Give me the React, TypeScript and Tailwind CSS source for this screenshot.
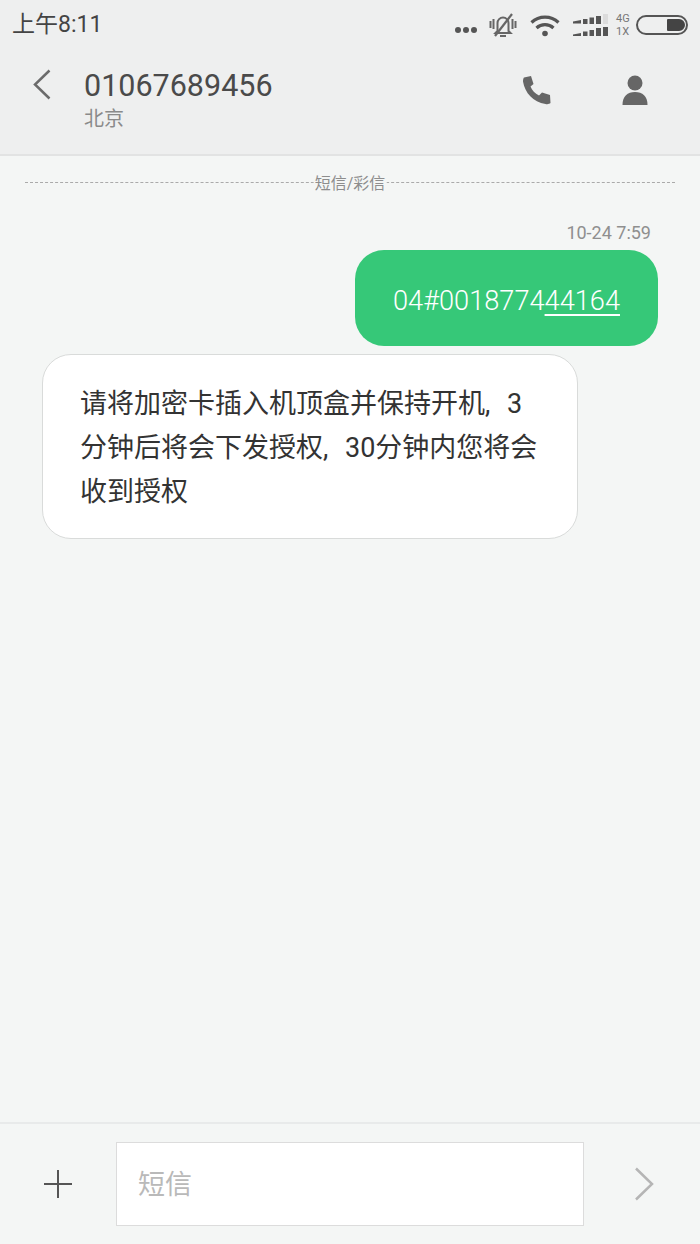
const font = { fontFamily: "Roboto, 'Noto Sans CJK SC', sans-serif" };

function StatusIcons() {
  return (
    <div className="flex items-center">
      {/* more dots */}
      <div className="flex gap-[2px] mt-[10px]">
        <span className="w-[6px] h-[6px] rounded-full bg-[#555]" />
        <span className="w-[6px] h-[6px] rounded-full bg-[#555]" />
        <span className="w-[6px] h-[6px] rounded-full bg-[#555]" />
      </div>
      {/* muted bell */}
      <svg className="ml-[12px]" width="28" height="24" viewBox="0 0 28 24" fill="none" stroke="#666" strokeWidth="2">
        <path d="M8.500 18V10a5.500 5.500 0 0 1 11 0v8l2 2H6.500Z" />
        <path d="M11 23h6" />
        <path d="M1.500 8v7M4.500 6v10M23.500 6v10M26.500 8v7" strokeWidth="2" />
        <path d="M6 23L23 1" strokeWidth="2.200" />
      </svg>
      {/* wifi */}
      <svg className="ml-[13px]" width="30" height="23" viewBox="0 0 30 23" fill="none" stroke="#555" strokeWidth="3.200">
        <path d="M1.500 8.500a19.500 19.500 0 0 1 27 0" />
        <path d="M6.500 14a12.500 12.500 0 0 1 17 0" />
        <circle cx="15" cy="19.500" r="2.800" fill="#555" stroke="none" />
      </svg>
      {/* signal */}
      <svg className="ml-[13px]" width="37" height="23" viewBox="0 0 37 23" fill="#555">
        <path d="M0 7.500L8 6v3.500H0Z" />
        <rect x="10" y="5" width="4.500" height="5" />
        <rect x="16.500" y="3.500" width="4.500" height="6.500" />
        <rect x="23" y="2" width="5" height="8" />
        <rect x="30" y="0" width="5" height="10" fill="#dcdcdc" />
        <path d="M0 20.500L8 19v3H0Z" />
        <rect x="10" y="17.500" width="4.500" height="4.500" />
        <rect x="16.500" y="16" width="4.500" height="6" />
        <rect x="23" y="14" width="5" height="8" />
        <rect x="30" y="13" width="5" height="9" />
      </svg>
      <div className="ml-[6px] flex flex-col text-[11px] leading-[13px] text-[#777] w-[16px]">
        <span>4G</span>
        <span>1X</span>
      </div>
      {/* battery */}
      <div className="ml-[4px] w-[52px] h-[20px] rounded-full border-2 border-[#555] flex justify-end items-center pr-[1px]">
        <span className="w-[18px] h-[12px] bg-[#444] rounded-r-[6px] rounded-l-[1px]" />
      </div>
    </div>
  );
}

export default function App() {
  return (
    <div className="w-[700px] h-[1244px] flex flex-col bg-[#f4f6f5] overflow-hidden" style={font}>
      <header className="h-[156px] shrink-0 bg-[#eeefef] border-b-2 border-[#e2e3e3] flex flex-col">
        <div className="h-[50px] flex items-center justify-between pl-[12px] pr-[12px]">
          <span className="text-[23px] pt-[1px] text-[#444]">上午8:11</span>
          <StatusIcons />
        </div>
        <div className="flex items-start pl-[33px] pr-[52px] pt-[18px]">
          <svg className="mt-[1px]" width="18" height="31" viewBox="0 0 18 31" fill="none" stroke="#6b6b6b" strokeWidth="2.500">
            <path d="M16.500 1.500L2 15.500l14.500 14" />
          </svg>
          <div className="ml-[33px] flex-1">
            <div className="text-[30.500px] leading-[36px] text-[#4a4a4a]">01067689456</div>
            <div className="text-[20px] leading-[26px] pt-[2px] text-[#8a8a8a]">北京</div>
          </div>
          <svg className="mt-[7px]" width="30" height="30" viewBox="0 0 30 30" fill="#666">
            <path d="M2 2.500L9 1l2.500 8-3 2.500c1.500 4 4.500 7 8.500 9l3-3 8 2.500L28.500 28c-1 1-3 1.500-5 1C11 27 3 18 1 6.500 1 4.500 1.500 3 2 2.500Z" />
          </svg>
          <svg className="ml-[70px] mt-[7px]" width="26" height="30" viewBox="0 0 26 30" fill="#666">
            <circle cx="13" cy="8" r="7.500" />
            <path d="M0.500 30c0-9 5-13 12.500-13s12.500 4 12.500 13Z" />
          </svg>
        </div>
      </header>

      <main className="flex-1 flex flex-col px-[25px]">
        <div className="relative mt-[16px] h-[20px] flex items-center">
          <div className="w-full border-t border-dashed border-[#aaa]" />
          <span className="absolute left-1/2 -translate-x-1/2 top-[2px] px-[1px] bg-[#f4f6f5] text-[16px] leading-[20px] text-[#8d8d8d]">短信/彩信</span>
        </div>
        <div className="mt-[30px] pr-[24px] text-right text-[18px] leading-[22px] text-[#8f8f8f]">10-24 7:59</div>
        <div className="mt-[6px] flex justify-end pr-[17px]">
          <div className="w-[303px] h-[96px] rounded-[29px] bg-[#36c878] text-white font-light text-[27.200px] pt-[6px] flex items-center justify-center">
            <span>
              04#0018774<span className="underline underline-offset-[4px]" style={{ textDecorationThickness: "1.500px" }}>44164</span>
            </span>
          </div>
        </div>
        <div className="mt-[8px] ml-[17px] w-[536px] h-[185px] rounded-[29px] bg-white border border-[#d9dbda] pl-[37px] pr-[30px] pt-[27px] text-[27px] leading-[44px] text-[#333] [word-spacing:10px]">
          请将加密卡插入机顶盒并保持开机, 3分钟后将会下发授权, 30分钟内您将会收到授权
        </div>
      </main>

      <footer className="h-[122px] shrink-0 border-t-2 border-[#e8eaea] flex items-center">
        <svg className="ml-[44px]" width="28" height="28" viewBox="0 0 28 28" stroke="#555" strokeWidth="2">
          <path d="M0 14h28M14 0v28" />
        </svg>
        <div className="ml-[44px] w-[468px] h-[84px] bg-white border border-[#dcdcdc] flex items-center pl-[21px] pt-[2px] text-[27px] text-[#b9b9b9]">短信</div>
        <svg className="ml-[50px]" width="20" height="34" viewBox="0 0 20 34" fill="none" stroke="#b5b5b5" strokeWidth="2.500">
          <path d="M2 1.500L18 17 2 32.500" />
        </svg>
      </footer>
    </div>
  );
}
